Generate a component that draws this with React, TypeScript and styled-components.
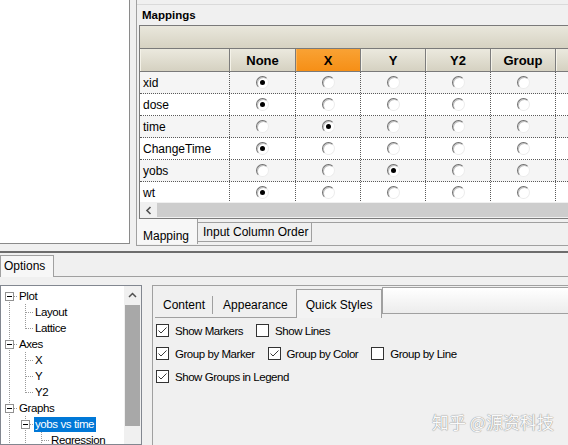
import React from 'react';
import styled, { createGlobalStyle } from 'styled-components';

const Global = createGlobalStyle`
  html, body { margin: 0; padding: 0; background: #f0f0f0; }
  body { font-family: "Liberation Sans", Arial, sans-serif; color: #000; }
  * { box-sizing: border-box; }
`;

const Root = styled.div`
  width: 568px;
  height: 445px;
  overflow: hidden;
  position: relative;
  display: flex;
  flex-direction: column;
  background: #f0f0f0;
`;

/* ---------- top pane ---------- */
const TopPane = styled.div`
  display: flex;
  height: 246px;
  flex: none;
`;

const LeftBlank = styled.div`
  flex: none;
  width: 130px;
  height: 244px;
  background: #fff;
  border-right: 1px solid #8a8a8a;
  border-bottom: 1px solid #8a8a8a;
  margin-right: 6px;
`;

const MappingsPane = styled.div`
  flex: 1;
  min-width: 0;
  display: flex;
  flex-direction: column;
  border-left: 1px solid #a0a0a0;
  border-bottom: 1px solid #a0a0a0;
  padding-top: 4px;
  background: #f0f0f0;
`;

const PaneInner = styled.div`
  flex: 1;
  display: flex;
  flex-direction: column;
  border-top: 1px solid #dadada;
  min-width: 0;
`;

const PaneTitle = styled.div`
  height: 20px;
  line-height: 20px;
  padding-left: 5px;
  font-size: 11.5px;
  font-weight: bold;
`;

const Frame = styled.div`
  margin-left: 2px;
  border: 1px solid #7a7a7a;
  border-right: none;
  overflow: hidden;
  display: flex;
  flex-direction: column;
  flex: none;
`;

const Band = styled.div`
  height: 23px;
  border-bottom: 1px solid #7a7a7a;
  background: linear-gradient(#e9e7dc, #d6d2c2);
`;

const GridRow = styled.div<{ $alt?: boolean; $head?: boolean }>`
  display: grid;
  grid-template-columns: 90px 66px 65px 65px 65px 65px 90px;
  height: ${p => (p.$head ? 23 : 22)}px;
  background: ${p => (p.$alt ? '#f5f5f5' : '#ffffff')};
  border-bottom: ${p => (p.$head ? '1px solid #7a7a7a' : '1px dotted #5a5a5a')};
`;

const HeadCell = styled.div<{ $hot?: boolean }>`
  border-right: 1px solid #7c7c7c;
  box-shadow: inset 1px 0 0 ${p => (p.$hot ? '#fbb358' : '#f4f2e8')};
  background: ${p =>
    p.$hot ? 'linear-gradient(#f9a234, #f68f16)' : 'linear-gradient(#ebe9de, #d5d1c1)'};
  font-size: 13px;
  font-weight: bold;
  display: flex;
  align-items: center;
  justify-content: center;
`;

const Body = styled.div`
  height: 130px;
  overflow: hidden;
`;

const NameCell = styled.div`
  border-right: 1px dotted #5a5a5a;
  font-size: 12px;
  padding-left: 3px;
  display: flex;
  align-items: center;
  white-space: nowrap;
`;

const RadioCell = styled.div`
  border-right: 1px dotted #5a5a5a;
  display: flex;
  align-items: center;
  justify-content: center;
`;

const Radio = styled.span<{ $on?: boolean }>`
  width: 13px;
  height: 13px;
  border-radius: 50%;
  border: 1px solid;
  border-color: #6f6f6f #ececec #ececec #6f6f6f;
  background: #fff;
  box-shadow: inset 1px 1px 0 #c2c2c2;
  display: flex;
  align-items: center;
  justify-content: center;
  &::after {
    content: '';
    width: 5px;
    height: 5px;
    border-radius: 50%;
    background: #000;
    display: ${p => (p.$on ? 'block' : 'none')};
  }
`;

const HScroll = styled.div`
  height: 16px;
  display: flex;
`;

const ScrollArrow = styled.div`
  width: 17px;
  flex: none;
  background: #f0f0f0;
  display: flex;
  align-items: center;
  justify-content: center;
`;

const ScrollThumbH = styled.div`
  flex: 1;
  background: #cdcdcd;
  margin: 1px 0;
`;

const BottomTabs = styled.div`
  height: 26px;
  display: flex;
  flex: none;
`;

const ActiveBottomTab = styled.div`
  width: 61px;
  height: 25px;
  border-right: 1px solid #a0a0a0;
  background: #f7f7f7;
  font-size: 12px;
  line-height: 14px;
  padding: 10px 0 0 6px;
`;

const BottomRest = styled.div`
  flex: 1;
  margin-top: 3px;
  border-top: 1px solid #a0a0a0;
  display: flex;
  align-items: flex-start;
`;

const BottomTab = styled.div`
  height: 19px;
  border: 1px solid #a0a0a0;
  border-top: none;
  border-left: none;
  padding: 0 3px 0 5px;
  font-size: 12px;
  line-height: 18px;
  background: #f0f0f0;
  white-space: nowrap;
`;

/* ---------- splitter ---------- */
const Splitter = styled.div`
  height: 7px;
  flex: none;
  border-bottom: 2px solid #6d6d6d;
`;

/* ---------- options ---------- */
const OptionsArea = styled.div`
  flex: 1;
  min-height: 0;
  display: flex;
  flex-direction: column;
  padding-top: 2px;
`;

const TabRow = styled.div`
  display: flex;
  height: 22px;
  flex: none;
`;

const OptionsTab = styled.div`
  width: 54px;
  border-top: 1px solid #a0a0a0;
  border-right: 1px solid #a0a0a0;
  border-left: 1px solid #a0a0a0;
  background: #f7f7f7;
  font-size: 12px;
  line-height: 20px;
  padding-left: 3px;
`;

const TabFill = styled.div`
  flex: 1;
  border-bottom: 1px solid #a0a0a0;
`;

const OptionsBody = styled.div`
  flex: 1;
  min-height: 0;
  display: flex;
  padding-top: 8px;
`;

const TreeBox = styled.div`
  width: 142px;
  flex: none;
  background: #fff;
  border: 1px solid #828790;
  display: flex;
  overflow: hidden;
`;

const TreeList = styled.div`
  flex: 1;
  padding-top: 2px;
  display: flex;
  flex-direction: column;
`;

const TreeRow = styled.div`
  display: flex;
  height: 16px;
  align-items: center;
`;

const dotV = 'repeating-linear-gradient(to bottom, #9a9a9a 0 1px, transparent 1px 2px)';
const dotH = 'repeating-linear-gradient(to right, #9a9a9a 0 1px, transparent 1px 2px)';

type GuideKind = 'line' | 'tee' | 'ell' | 'blank';

const Guide = styled.span<{ $kind: GuideKind }>`
  flex: none;
  width: 16px;
  height: 16px;
  background-repeat: no-repeat;
  ${({ $kind }) => {
    switch ($kind) {
      case 'line':
        return `background-image: ${dotV}; background-size: 1px 16px; background-position: 8px 0;`;
      case 'tee':
        return `background-image: ${dotV}, ${dotH}; background-size: 1px 16px, 7px 1px; background-position: 8px 0, 9px 8px;`;
      case 'ell':
        return `background-image: ${dotV}, ${dotH}; background-size: 1px 9px, 7px 1px; background-position: 8px 0, 9px 8px;`;
      default:
        return '';
    }
  }}
`;

const Expander = styled.span<{ $up?: boolean; $down?: boolean }>`
  flex: none;
  width: 16px;
  height: 16px;
  display: flex;
  align-items: flex-start;
  padding: 4px 0 0 4px;
  background-repeat: no-repeat;
  background-image: ${dotV}, ${dotV}, ${dotH};
  background-size: 1px ${p => (p.$up ? 8 : 0)}px, 1px ${p => (p.$down ? 8 : 0)}px, 7px 1px;
  background-position: 8px 0, 8px 8px, 9px 8px;
`;

const MinusBox = styled.span`
  width: 9px;
  height: 9px;
  border: 1px solid #919191;
  background: #fff;
  display: flex;
  align-items: center;
  justify-content: center;
  &::after {
    content: '';
    width: 5px;
    height: 1px;
    background: #000;
  }
`;

const TreeLabel = styled.span<{ $sel?: boolean }>`
  margin-left: 1px;
  padding: 0 2px 0 1px;
  height: 15px;
  line-height: 15px;
  font-size: 11.5px;
  letter-spacing: -0.4px;
  white-space: nowrap;
  background: ${p => (p.$sel ? '#0078d7' : 'transparent')};
  color: ${p => (p.$sel ? '#fff' : '#000')};
`;

const VScroll = styled.div`
  width: 17px;
  flex: none;
  background: #f0f0f0;
  display: flex;
  flex-direction: column;
`;

const VArrow = styled.div`
  height: 17px;
  flex: none;
  display: flex;
  align-items: center;
  justify-content: center;
`;

const VThumb = styled.div`
  height: 121px;
  margin: 2px 1px 0;
  background: #a8a8a8;
  flex: none;
`;

const RightPanel = styled.div`
  flex: 1;
  min-width: 0;
  margin-left: 10px;
  border-left: 1px solid #a0a0a0;
  border-top: 1px solid #a0a0a0;
  padding-left: 2px;
  display: flex;
  flex-direction: column;
`;

const TabStrip = styled.div`
  height: 32px;
  display: flex;
  align-items: flex-start;
  flex: none;
`;

const TabGroup = styled.div`
  height: 32px;
  border-bottom: 1px solid #a0a0a0;
  display: flex;
  align-items: center;
  padding: 6px 8px 0 8px;
  font-size: 12px;
`;

const TabDivider = styled.span`
  width: 1px;
  height: 18px;
  background: #a0a0a0;
  margin: 0 10px 0 7px;
`;

const SelectedTab = styled.div`
  margin-top: 3px;
  height: 29px;
  border: 1px solid #a0a0a0;
  border-bottom: none;
  background: #f3f3f3;
  font-size: 12px;
  display: flex;
  align-items: center;
  padding: 2px 9px 0 9px;
  white-space: nowrap;
`;

const StripFiller = styled.div`
  flex: 1;
  height: 27px;
  margin-top: 1px;
  border: 1px solid #a0a0a0;
  border-right: none;
  background: linear-gradient(#ffffff, #ececec);
`;

const Checks = styled.div`
  display: flex;
  flex-direction: column;
  gap: 10px;
  padding: 6px 0 0 1px;
`;

const CheckLine = styled.div`
  display: flex;
  align-items: center;
  gap: 13px;
  height: 13px;
`;

const CheckItem = styled.label`
  display: flex;
  align-items: center;
  gap: 6px;
  font-size: 11.5px;
  letter-spacing: -0.45px;
  white-space: nowrap;
`;

const Box = styled.span`
  width: 13px;
  height: 13px;
  border: 1px solid #333;
  background: #fff;
  display: flex;
  align-items: center;
  justify-content: center;
  flex: none;
`;

const Watermark = styled.div`
  position: absolute;
  left: 432px;
  top: 409px;
  font-family: "Noto Sans CJK SC", sans-serif;
  font-size: 17px;
  color: #fafafa;
  text-shadow: 0 0 1px #8e8e8e, 0 0 1px #8e8e8e;
  white-space: nowrap;
  pointer-events: none;
`;

/* ---------- data ---------- */
const cols = ['None', 'X', 'Y', 'Y2', 'Group'];
const rows = [
  { name: 'xid', sel: 0 },
  { name: 'dose', sel: 0 },
  { name: 'time', sel: 1 },
  { name: 'ChangeTime', sel: 0 },
  { name: 'yobs', sel: 2 },
  { name: 'wt', sel: 0 },
];

type TreeItem = {
  guides: GuideKind[];
  exp?: { up?: boolean; down?: boolean };
  label: string;
  sel?: boolean;
};

const tree: TreeItem[] = [
  { guides: [], exp: { down: true }, label: 'Plot' },
  { guides: ['line', 'tee'], label: 'Layout' },
  { guides: ['line', 'ell'], label: 'Lattice' },
  { guides: [], exp: { up: true, down: true }, label: 'Axes' },
  { guides: ['line', 'tee'], label: 'X' },
  { guides: ['line', 'tee'], label: 'Y' },
  { guides: ['line', 'ell'], label: 'Y2' },
  { guides: [], exp: { up: true, down: true }, label: 'Graphs' },
  { guides: ['line'], exp: { up: true, down: true }, label: 'yobs vs time', sel: true },
  { guides: ['line', 'line', 'tee'], label: 'Regression' },
];

const Check = ({ on, label }: { on?: boolean; label: string }) => (
  <CheckItem>
    <Box>
      {on && (
        <svg width="11" height="11" viewBox="0 0 11 11">
          <path d="M1.5 5.5 L4 8 L9.5 2.5" fill="none" stroke="#3a3a3a" strokeWidth="1" />
        </svg>
      )}
    </Box>
    {label}
  </CheckItem>
);

export default function App() {
  return (
    <Root>
      <Global />
      <TopPane>
        <LeftBlank />
        <MappingsPane>
          <PaneInner>
            <PaneTitle>Mappings</PaneTitle>
            <Frame>
              <Band />
              <GridRow $head>
                <HeadCell />
                {cols.map(c => (
                  <HeadCell key={c} $hot={c === 'X'}>
                    {c}
                  </HeadCell>
                ))}
                <HeadCell />
              </GridRow>
              <Body>
                {rows.map((r, i) => (
                  <GridRow key={r.name} $alt={i % 2 === 0}>
                    <NameCell>{r.name}</NameCell>
                    {cols.map((c, ci) => (
                      <RadioCell key={c}>
                        <Radio $on={r.sel === ci} />
                      </RadioCell>
                    ))}
                    <RadioCell />
                  </GridRow>
                ))}
              </Body>
              <HScroll>
                <ScrollArrow>
                  <svg width="8" height="9" viewBox="0 0 8 9">
                    <path d="M5.5 1 L2 4.5 L5.5 8" fill="none" stroke="#505050" strokeWidth="1.6" />
                  </svg>
                </ScrollArrow>
                <ScrollThumbH />
              </HScroll>
            </Frame>
            <BottomTabs>
              <ActiveBottomTab>Mapping</ActiveBottomTab>
              <BottomRest>
                <BottomTab>Input Column Order</BottomTab>
              </BottomRest>
            </BottomTabs>
          </PaneInner>
        </MappingsPane>
      </TopPane>
      <Splitter />
      <OptionsArea>
        <TabRow>
          <OptionsTab>Options</OptionsTab>
          <TabFill />
        </TabRow>
        <OptionsBody>
          <TreeBox>
            <TreeList>
              {tree.map(t => (
                <TreeRow key={t.label}>
                  {t.guides.map((g, gi) => (
                    <Guide key={gi} $kind={g} />
                  ))}
                  {t.exp && (
                    <Expander $up={t.exp.up} $down={t.exp.down}>
                      <MinusBox />
                    </Expander>
                  )}
                  <TreeLabel $sel={t.sel}>{t.label}</TreeLabel>
                </TreeRow>
              ))}
            </TreeList>
            <VScroll>
              <VArrow>
                <svg width="9" height="6" viewBox="0 0 9 6">
                  <path d="M1 5 L4.5 1.5 L8 5" fill="none" stroke="#505050" strokeWidth="1.5" />
                </svg>
              </VArrow>
              <VThumb />
            </VScroll>
          </TreeBox>
          <RightPanel>
            <TabStrip>
              <TabGroup>
                <span>Content</span>
                <TabDivider />
                <span>Appearance</span>
              </TabGroup>
              <SelectedTab>Quick Styles</SelectedTab>
              <StripFiller />
            </TabStrip>
            <Checks>
              <CheckLine>
                <Check on label="Show Markers" />
                <Check label="Show Lines" />
              </CheckLine>
              <CheckLine>
                <Check on label="Group by Marker" />
                <Check on label="Group by Color" />
                <Check label="Group by Line" />
              </CheckLine>
              <CheckLine>
                <Check on label="Show Groups in Legend" />
              </CheckLine>
            </Checks>
          </RightPanel>
        </OptionsBody>
      </OptionsArea>
      <Watermark>知乎 @源资科技</Watermark>
    </Root>
  );
}
